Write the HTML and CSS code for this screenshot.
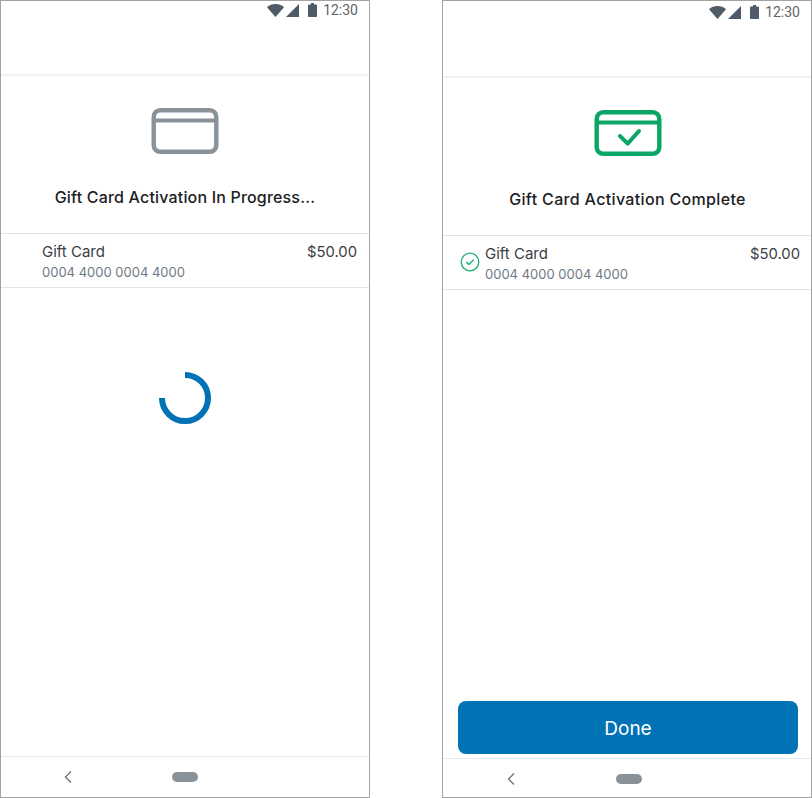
FILE: index.html
```html
<!DOCTYPE html>
<html lang="en">
<head>
    <meta charset="UTF-8">
    <meta name="viewport" content="width=device-width, initial-scale=1.0">
    <title>Gift Card Activation</title>
    <link rel="stylesheet" href="styles.css">
</head>
<body>
    <div class="screens">
        <!-- In progress -->
        <section class="phone">
            <div class="status-bar">
                <svg class="status-icon" width="17" height="13" viewBox="0 0 17 13"><path d="M0 3.2C2.3 1.2 5.2 0 8.5 0s6.200 1.200 8.500 3.200L8.500 13z"/></svg>
                <svg class="status-icon signal" width="13" height="13" viewBox="0 0 13 13"><path d="M13 0v13H0z"/></svg>
                <svg class="status-icon battery" width="9" height="14" viewBox="0 0 9 14"><path d="M3 0h3v1.500h2.200c.4 0 .8.400.8.800v11c0 .4-.4.700-.8.700H.8c-.4 0-.8-.3-.8-.7v-11c0-.4.400-.8.800-.8H3z"/></svg>
                <span class="time">12:30</span>
            </div>
            <div class="app-bar"></div>
            <div class="hero">
                <svg class="hero-icon" width="68" height="48" viewBox="0 0 68 48" fill="none" stroke="#8a9299" stroke-width="4.400">
                    <rect x="2.700" y="3.200" width="62.600" height="41.600" rx="6.500"/>
                    <path d="M2.700 13.500h62.600" stroke-width="3.800"/>
                </svg>
                <h1 class="hero-title">Gift Card Activation In Progress...</h1>
            </div>
            <div class="card-row">
                <div class="card-info">
                    <div class="card-name">Gift Card</div>
                    <div class="card-number">0004 4000 0004 4000</div>
                </div>
                <div class="card-amount">$50.00</div>
            </div>
            <div class="content spinner-area">
                <svg width="52" height="52" viewBox="0 0 52 52" fill="none"><path d="M26 3A23 23 0 1 1 3 26" stroke="#0072b5" stroke-width="6"/></svg>
            </div>
            <nav class="nav-bar">
                <svg class="nav-back" width="10" height="14" viewBox="0 0 10 14" fill="none"><path d="M8 1.500L2.500 7 8 12.500" stroke="#6f7a85" stroke-width="1.500"/></svg>
                <span class="nav-home"></span>
            </nav>
        </section>

        <!-- Complete -->
        <section class="phone phone-done">
            <div class="status-bar">
                <svg class="status-icon" width="17" height="13" viewBox="0 0 17 13"><path d="M0 3.2C2.3 1.2 5.2 0 8.500 0s6.200 1.200 8.500 3.200L8.500 13z"/></svg>
                <svg class="status-icon signal" width="13" height="13" viewBox="0 0 13 13"><path d="M13 0v13H0z"/></svg>
                <svg class="status-icon battery" width="9" height="14" viewBox="0 0 9 14"><path d="M3 0h3v1.500h2.200c.4 0 .8.400.8.800v11c0 .4-.4.700-.8.700H.8c-.4 0-.8-.3-.8-.7v-11c0-.4.400-.8.800-.8H3z"/></svg>
                <span class="time">12:30</span>
            </div>
            <div class="app-bar"></div>
            <div class="hero">
                <svg class="hero-icon" width="68" height="48" viewBox="0 0 68 48" fill="none" stroke="#0ba566" stroke-width="4.400">
                    <rect x="2.700" y="3.200" width="62.600" height="41.600" rx="6.500"/>
                    <path d="M2.700 13.500h62.600" stroke-width="3.800"/>
                    <path d="M26 27l7.700 7.700L45 22" stroke-width="4" stroke-linecap="round" stroke-linejoin="round"/>
                </svg>
                <h1 class="hero-title">Gift Card Activation Complete</h1>
            </div>
            <div class="card-row">
                <svg class="row-check" width="20" height="20" viewBox="0 0 20 20" fill="none" stroke="#1fae74" stroke-width="1.300">
                    <circle cx="10" cy="10" r="8.800"/>
                    <path d="M6.500 10.200l2.400 2.300 4.500-4.500" stroke-linecap="round" stroke-linejoin="round"/>
                </svg>
                <div class="card-info">
                    <div class="card-name">Gift Card</div>
                    <div class="card-number">0004 4000 0004 4000</div>
                </div>
                <div class="card-amount">$50.00</div>
            </div>
            <div class="content"></div>
            <button class="done-button">Done</button>
            <nav class="nav-bar">
                <svg class="nav-back" width="10" height="14" viewBox="0 0 10 14" fill="none"><path d="M8 1.500L2.500 7 8 12.500" stroke="#6f7a85" stroke-width="1.500"/></svg>
                <span class="nav-home"></span>
            </nav>
        </section>
    </div>
</body>
</html>
```

FILE: styles.css
```css
body {
    margin: 0;
    background-color: #fff;
    font-family: Inter, "Liberation Sans", sans-serif;
}

.screens {
    display: flex;
    justify-content: space-between;
    width: 812px;
    height: 798px;
}

.phone {
    display: flex;
    flex-direction: column;
    width: 370px;
    height: 798px;
    box-sizing: border-box;
    border: 1px solid #a3a3a3;
    overflow: hidden;
    background-color: #fff;
}

.phone-done {
    padding-top: 2px;
}

.status-bar {
    display: flex;
    align-items: center;
    justify-content: flex-end;
    height: 18px;
    padding-right: 11px;
}

.status-icon {
    fill: #4f5b66;
    margin-right: 2px;
}

.signal {
    margin-right: 9px;
}

.battery {
    margin-right: 6px;
}

.time {
    font-family: Roboto, sans-serif;
    font-size: 14px;
    color: #5f6368;
}

.app-bar {
    height: 55px;
    border-bottom: 1px solid #ececec;
    box-shadow: 0 1px 2px rgba(0, 0, 0, 0.05);
}

.hero {
    display: flex;
    flex-direction: column;
    align-items: center;
    height: 158px;
    border-bottom: 1px solid #e4e4e4;
}

.phone-done .hero {
    padding-left: 1px;
}

.hero-icon {
    margin-top: 32px;
}

.hero-title {
    margin: 32px 0 0;
    font-size: 16px;
    font-weight: 500;
    letter-spacing: 0.18px;
    line-height: 20px;
    color: #202124;
}

.phone-done .hero-title {
    letter-spacing: 0.34px;
}

.card-row {
    position: relative;
    display: flex;
    justify-content: space-between;
    height: 54px;
    padding: 8px 12px 0 41px;
    box-sizing: border-box;
    border-bottom: 1px solid #e4e4e4;
}

.phone-done .card-row {
    padding: 8px 11px 0 42px;
}

.row-check {
    position: absolute;
    left: 16.5px;
    top: 16px;
}

.card-name {
    font-size: 15px;
    line-height: 20px;
    color: #3c4043;
}

.card-number {
    font-size: 13px;
    line-height: 20px;
    color: #6f7a85;
}

.card-amount {
    font-size: 14.800px;
    line-height: 20px;
    color: #3c4043;
}

.content {
    flex: 1;
}

.spinner-area {
    display: flex;
    justify-content: center;
    align-items: flex-start;
    padding: 84px 0 0 0;
}

.done-button {
    height: 53px;
    margin: 0 13px 4px 15px;
    padding: 2px 0 0;
    border: none;
    border-radius: 8px;
    background-color: #0072b5;
    color: #fff;
    font-family: inherit;
    font-size: 19px;
    cursor: pointer;
}

.nav-bar {
    position: relative;
    flex-shrink: 0;
    height: 40px;
    border-top: 1px solid #e2e8ee;
}

.phone-done .nav-bar {
    margin-bottom: -2px;
}

.nav-back {
    position: absolute;
    left: 62px;
    top: 13px;
}

.phone-done .nav-back {
    left: 63px;
}

.nav-home {
    position: absolute;
    left: 171px;
    top: 15px;
    width: 26px;
    height: 10px;
    border-radius: 5px;
    background-color: #8a9299;
}

.phone-done .nav-home {
    left: 173px;
}
```
